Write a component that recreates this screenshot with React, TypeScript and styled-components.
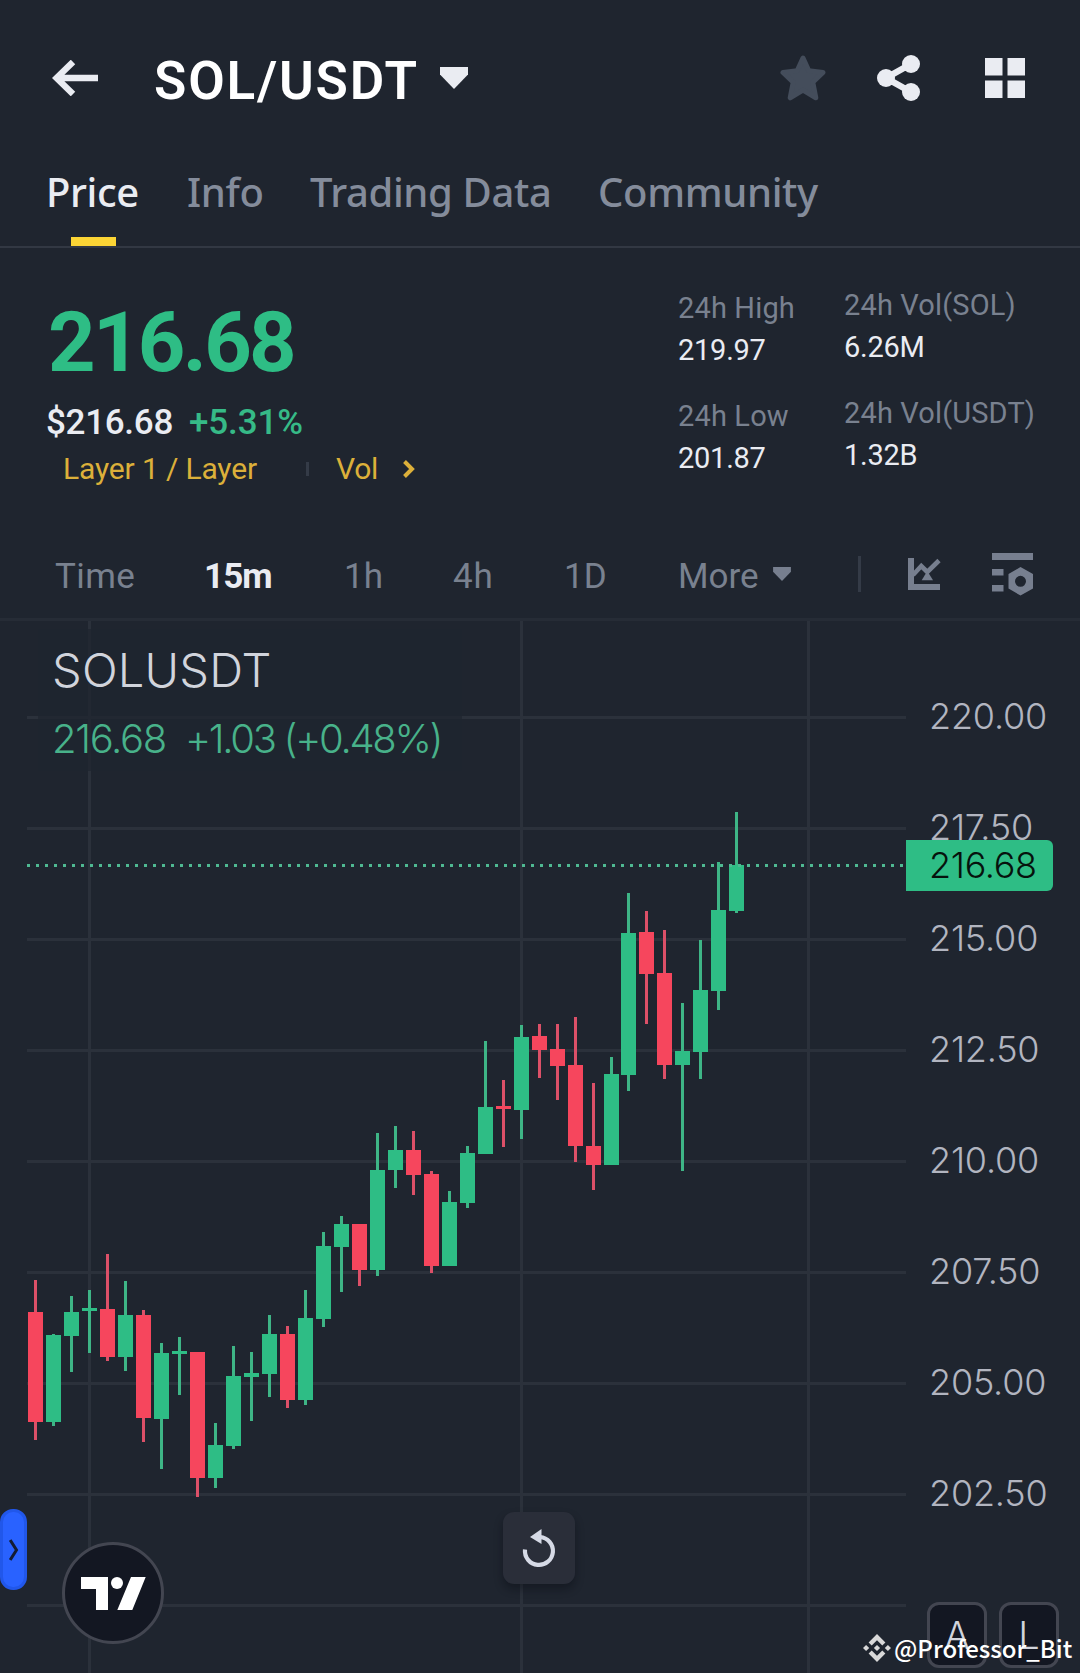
import React from "react";
import styled, { createGlobalStyle } from "styled-components";

const color = {
  bg: "#1f252f",
  text: "#eaecf2",
  muted: "#848c9b",
  dim: "#79818f",
  icon: "#777f8f",
  green: "#2ebd85",
  red: "#f6465d",
  yellow: "#fcd535",
  gold: "#dcb03a",
  grid: "#2b313b",
  axis: "#b2b5c0",
};

const sans = `Roboto, "Noto Sans", "Liberation Sans", sans-serif`;
const tabSans = `"Noto Sans", Roboto, "Liberation Sans", sans-serif`;
const chartSans = `Inter, Roboto, "Liberation Sans", sans-serif`;

const GlobalStyle = createGlobalStyle`
  *, *::before, *::after { box-sizing: border-box; }
  html, body { margin: 0; padding: 0; background: ${color.bg}; }
`;

const Page = styled.div`
  width: 1080px;
  height: 1673px;
  display: flex;
  flex-direction: column;
  overflow: hidden;
  background: ${color.bg};
  color: ${color.text};
  font-family: ${sans};
`;

const Text = styled.span<{
  $size: number;
  $line: number;
  $weight?: number;
  $color?: string;
  $track?: number;
  $family?: string;
}>`
  display: block;
  white-space: pre;
  font-size: ${(p) => p.$size}px;
  line-height: ${(p) => p.$line}px;
  font-weight: ${(p) => p.$weight ?? 400};
  color: ${(p) => p.$color ?? color.text};
  letter-spacing: ${(p) => p.$track ?? 0}px;
  font-family: ${(p) => p.$family ?? "inherit"};
`;

const Icon = styled.svg`
  display: block;
  flex: none;
`;

/* ---------- header ---------- */

const Header = styled.header`
  height: 160px;
  flex: none;
  display: flex;
  align-items: center;
  padding: 0 55px 4px 52px;
`;

const Pair = styled.div`
  display: flex;
  align-items: center;
  width: 314px;
  margin-left: 56px;
  justify-content: space-between;
`;

const Title = styled.h1`
  margin: 0;
  padding-top: 5px;
  font-size: 53px;
  line-height: 68px;
  font-weight: 600;
  letter-spacing: 1.8px;
  color: #fff;
`;

const Actions = styled.div`
  margin-left: auto;
  display: flex;
  align-items: center;
`;

const ActionButton = styled.div<{ $after?: number }>`
  margin-right: ${(p) => p.$after ?? 0}px;
`;

/* ---------- tabs ---------- */

const Tabs = styled.nav`
  height: 88px;
  flex: none;
  display: grid;
  grid-template-columns: 141px 123px 288px auto;
  padding-left: 46px;
  border-bottom: 2px solid #323843;
`;

const Tab = styled.div`
  display: flex;
  flex-direction: column;
  justify-content: space-between;
  padding-top: 7px;
`;

const TabLabel = styled.span<{ $active?: boolean }>`
  font-family: ${tabSans};
  font-size: 40px;
  line-height: 50px;
  font-weight: 500;
  letter-spacing: -0.35px;
  white-space: pre;
  color: ${(p) => (p.$active ? color.text : color.muted)};
`;

const Underline = styled.div`
  width: 45px;
  height: 9px;
  margin-left: 25px;
  background: ${color.yellow};
`;

/* ---------- summary ---------- */

const Summary = styled.section`
  height: 267px;
  flex: none;
  display: flex;
  justify-content: space-between;
  padding: 0 38px 0 46px;
`;

const PriceBlock = styled.div`
  padding-top: 49px;
`;

const LastPrice = styled.div`
  padding-left: 2px;
  font-size: 83px;
  line-height: 92px;
  font-weight: 700;
  letter-spacing: -2.7px;
  color: ${color.green};
`;

const Inline = styled.div<{ $gap: number; $left?: number }>`
  display: flex;
  align-items: center;
  gap: ${(p) => p.$gap}px;
  padding-left: ${(p) => p.$left ?? 0}px;
`;

const Divider = styled.div<{ $height: number }>`
  width: 3px;
  height: ${(p) => p.$height}px;
  background: #343b47;
`;

const Stats = styled.div`
  display: grid;
  grid-template-columns: 166px 198px;
`;

const StatColumn = styled.div<{ $top: number }>`
  display: flex;
  flex-direction: column;
  gap: 24px;
  padding-top: ${(p) => p.$top}px;
`;

/* ---------- intervals ---------- */

const Intervals = styled.div`
  height: 103px;
  flex: none;
  display: flex;
  align-items: center;
  padding: 21px 45px 0 55px;
`;

const Slot = styled.div<{ $width: number }>`
  width: ${(p) => p.$width}px;
  flex: none;
  display: flex;
  align-items: center;
`;

const CaretSlot = styled(Slot)`
  padding-bottom: 6px;
`;

const Tools = styled.div`
  flex: 1;
  display: grid;
  grid-template-columns: 50px 84px auto;
  align-items: center;
  padding-bottom: 6px;
`;

/* ---------- chart ---------- */

const Chart = styled.main`
  position: relative;
  flex: 1;
  display: flex;
  border-top: 3px solid #262c36;
`;

const Axis = styled.div`
  flex: 1;
  padding: 39px 0 0 23px;
`;

const AxisRow = styled.div`
  height: 111px;
  display: flex;
  align-items: center;
`;

const Legend = styled.div`
  position: absolute;
  left: 38px;
  top: 8px;
  width: 424px;
  height: 142px;
  padding: 10px 0 0 14px;
  background: rgba(31, 37, 47, 0.72);
`;

const PriceTag = styled.div`
  position: absolute;
  left: 906px;
  top: 219px;
  width: 147px;
  height: 51px;
  padding-left: 23px;
  border-radius: 0 6px 6px 0;
  background: ${color.green};
`;

const DrawerHandle = styled.div`
  position: absolute;
  left: 0;
  top: 888px;
  width: 27px;
  height: 81px;
  display: flex;
  align-items: center;
  justify-content: center;
  border: 3px solid #2157ea;
  border-radius: 13px;
  background: #2962ff;
`;

const Brand = styled.div`
  position: absolute;
  left: 62px;
  top: 921px;
  width: 102px;
  height: 102px;
  display: flex;
  align-items: center;
  justify-content: center;
  border: 3px solid #434651;
  border-radius: 50%;
  background: #131722;
`;

const ResetButton = styled.div`
  position: absolute;
  left: 503px;
  top: 891px;
  width: 72px;
  height: 72px;
  display: flex;
  align-items: center;
  justify-content: center;
  border-radius: 11px;
  background: #2a2e39;
  box-shadow: 0 5px 9px rgba(8, 11, 18, 0.4);
`;

const ScaleKeys = styled.div`
  position: absolute;
  left: 927px;
  top: 981px;
  display: flex;
  gap: 12px;
`;

const ScaleKey = styled.div`
  width: 60px;
  height: 66px;
  display: flex;
  justify-content: center;
  padding-top: 7px;
  border: 3px solid #434651;
  border-radius: 12px;
  background: #131722;
`;

const Watermark = styled.div`
  position: absolute;
  left: 863px;
  top: 1009px;
  display: flex;
  align-items: center;
  gap: 3px;
`;

type Candle = [up: 0 | 1, high: number, top: number, bottom: number, low: number];

const candles: Candle[] = [
  [0, 1280, 1312, 1422, 1440],
  [1, 1334, 1335, 1422, 1426],
  [1, 1296, 1312, 1336, 1372],
  [1, 1290, 1308, 1311, 1353],
  [0, 1254, 1309, 1357, 1361],
  [1, 1281, 1315, 1357, 1371],
  [0, 1310, 1315, 1418, 1442],
  [1, 1343, 1353, 1419, 1469],
  [1, 1337, 1351, 1354, 1395],
  [0, 1352, 1352, 1478, 1497],
  [1, 1423, 1445, 1478, 1488],
  [1, 1346, 1376, 1446, 1449],
  [1, 1352, 1373, 1377, 1421],
  [1, 1315, 1334, 1374, 1397],
  [0, 1326, 1334, 1400, 1408],
  [1, 1290, 1318, 1400, 1405],
  [1, 1232, 1246, 1319, 1327],
  [1, 1216, 1224, 1247, 1292],
  [0, 1224, 1224, 1270, 1286],
  [1, 1133, 1170, 1270, 1276],
  [1, 1126, 1150, 1170, 1188],
  [0, 1131, 1150, 1175, 1195],
  [0, 1171, 1174, 1266, 1273],
  [1, 1191, 1202, 1266, 1266],
  [1, 1146, 1153, 1203, 1208],
  [1, 1041, 1107, 1154, 1154],
  [0, 1080, 1106, 1109, 1147],
  [1, 1025, 1037, 1110, 1139],
  [0, 1024, 1036, 1050, 1078],
  [0, 1024, 1049, 1066, 1100],
  [0, 1017, 1065, 1146, 1162],
  [0, 1083, 1146, 1165, 1190],
  [1, 1057, 1074, 1165, 1165],
  [1, 893, 933, 1075, 1091],
  [0, 911, 932, 974, 1024],
  [0, 930, 973, 1065, 1079],
  [1, 1003, 1051, 1065, 1171],
  [1, 940, 990, 1052, 1079],
  [1, 862, 910, 991, 1010],
  [1, 812, 865, 911, 913],
];

const priceLevels = ["220.00", "217.50", "215.00", "212.50", "210.00", "207.50", "205.00", "202.50"];
const gridRows = [...priceLevels.keys(), priceLevels.length].map((i) => 717.5 + i * 111);
const gridColumns = [89.5, 521.5, 808.5];

function Plot() {
  return (
    <Icon width="906" height="1052" viewBox="0 621 906 1052" shapeRendering="crispEdges">
      <g stroke={color.grid} strokeWidth="3">
        {gridRows.map((y) => (
          <line key={y} x1="27" x2="906" y1={y} y2={y} />
        ))}
        {gridColumns.map((x) => (
          <line key={x} x1={x} x2={x} y1="621" y2="1673" />
        ))}
      </g>
      {candles.map(([up, high, top, bottom, low], i) => {
        const x = 28 + i * 18 - (i > 32 ? 1 : 0);
        return (
          <g key={i}>
            <rect x={x + 6} y={high} width="3" height={low - high} fill={up ? "#3eb586" : "#dc5068"} />
            <rect x={x} y={top} width="15" height={bottom - top} fill={up ? color.green : color.red} />
          </g>
        );
      })}
      <line x1="27" x2="906" y1="865.5" y2="865.5" stroke="#4fb992" strokeWidth="3" strokeDasharray="3 6" />
    </Icon>
  );
}

function Caret({ width, height, fill }: { width: number; height: number; fill: string }) {
  return (
    <Icon width={width} height={height} viewBox="0 0 28 22">
      <path d="M0 0H28V7.5L14 22L0 7.5Z" fill={fill} />
    </Icon>
  );
}

function Stat({ label, value }: { label: string; value: string }) {
  return (
    <div>
      <Text $size={29} $line={41} $color={color.dim} $track={0.15}>{label}</Text>
      <Text $size={29} $line={43} $track={-0.25}>{value}</Text>
    </div>
  );
}

export default function App() {
  return (
    <Page>
      <GlobalStyle />
      <Header>
        <Icon width="46" height="36" viewBox="0 0 46 36">
          <path d="M21 2L4.5 18L21 34M5 18H46" fill="none" stroke={color.text} strokeWidth="6.4" />
        </Icon>
        <Pair>
          <Title>SOL/USDT</Title>
          <Caret width={28} height={22} fill={color.text} />
        </Pair>
        <Actions>
          <ActionButton $after={51}>
            <Icon width="46" height="46" viewBox="0 0 46 46">
              <path
                d="M23 3L28.8 15.8L43 17.5L32.8 27.2L35.8 42.8L23 35.2L10.2 42.8L13.2 27.2L3 17.5L17.2 15.8Z"
                fill="#444d5b"
                stroke="#444d5b"
                strokeWidth="5"
                strokeLinejoin="round"
              />
            </Icon>
          </ActionButton>
          <ActionButton $after={65}>
            <Icon width="43" height="46" viewBox="0 0 43 46">
              <path d="M34 9L9 23L34 37" fill="none" stroke={color.text} strokeWidth="6.5" />
              <g fill={color.text}>
                <circle cx="34" cy="9" r="9" />
                <circle cx="9" cy="23" r="9" />
                <circle cx="34" cy="37" r="9" />
              </g>
            </Icon>
          </ActionButton>
          <ActionButton>
            <Icon width="40" height="40" viewBox="0 0 40 40">
              <path d="M0 0H17.5V17.5H0ZM22.5 0H40V17.5H22.5ZM0 22.5H17.5V40H0ZM22.5 22.5H40V40H22.5Z" fill={color.text} />
            </Icon>
          </ActionButton>
        </Actions>
      </Header>

      <Tabs>
        <Tab>
          <TabLabel $active>Price</TabLabel>
          <Underline />
        </Tab>
        <Tab>
          <TabLabel>Info</TabLabel>
        </Tab>
        <Tab>
          <TabLabel>Trading Data</TabLabel>
        </Tab>
        <Tab>
          <TabLabel>Community</TabLabel>
        </Tab>
      </Tabs>

      <Summary>
        <PriceBlock>
          <LastPrice>216.68</LastPrice>
          <Inline $gap={16}>
            <Text $size={35} $line={68} $weight={500} $track={-0.3}>$216.68</Text>
            <Text $size={35} $line={68} $weight={500} $track={-0.1} $color="#36ba87">+5.31%</Text>
          </Inline>
          <Inline $gap={0} $left={17}>
            <Slot $width={243}>
              <Text $size={30} $line={24} $color={color.gold} $track={-0.15}>Layer 1 / Layer</Text>
            </Slot>
            <Slot $width={30}>
              <Divider $height={14} />
            </Slot>
            <Slot $width={67}>
              <Text $size={30} $line={24} $color={color.gold} $track={-0.3}>Vol</Text>
            </Slot>
            <Icon width="12" height="18" viewBox="0 0 12 18">
              <path d="M1.5 1.5L9 9L1.5 16.5" fill="none" stroke={color.gold} strokeWidth="4" />
            </Icon>
          </Inline>
        </PriceBlock>
        <Stats>
          <StatColumn $top={40}>
            <Stat label="24h High" value="219.97" />
            <Stat label="24h Low" value="201.87" />
          </StatColumn>
          <StatColumn $top={37}>
            <Stat label="24h Vol(SOL)" value="6.26M" />
            <Stat label="24h Vol(USDT)" value="1.32B" />
          </StatColumn>
        </Stats>
      </Summary>

      <Intervals>
        <Slot $width={149}>
          <Text $size={35} $line={44} $color={color.dim} $track={0.4}>Time</Text>
        </Slot>
        <Slot $width={140}>
          <Text $size={35} $line={44} $weight={700} $track={-0.9}>15m</Text>
        </Slot>
        <Slot $width={109}>
          <Text $size={35} $line={44} $color={color.dim}>1h</Text>
        </Slot>
        <Slot $width={111}>
          <Text $size={35} $line={44} $color={color.dim} $track={0.8}>4h</Text>
        </Slot>
        <Slot $width={114}>
          <Text $size={35} $line={44} $color={color.dim}>1D</Text>
        </Slot>
        <Slot $width={95}>
          <Text $size={35} $line={44} $color={color.dim}>More</Text>
        </Slot>
        <CaretSlot $width={85}>
          <Caret width={18} height={14} fill={color.icon} />
        </CaretSlot>
        <Tools>
          <Divider $height={36} />
          <Icon width="33" height="32" viewBox="0 0 33 32">
            <path d="M0 0H6V26H32V32H0Z" fill={color.icon} />
            <path d="M5 17L13.3 8L19.3 14L31 2.5" fill="none" stroke={color.icon} strokeWidth="4.6" />
            <path d="M19.3 13L25 22.3H13.7Z" fill={color.icon} />
          </Icon>
          <Icon width="42" height="43" viewBox="0 0 42 43">
            <path d="M0 0H41V7H0ZM0 16H11.5V22.5H0ZM0 32H11.5V38.5H0Z" fill={color.icon} />
            <path
              fillRule="evenodd"
              d="M28.5 14L41 21V35.5L28.5 42.5L16.5 35.5V21ZM28.5 22.8A5.5 5.5 0 1 0 28.5 33.8A5.5 5.5 0 1 0 28.5 22.8Z"
              fill={color.icon}
            />
          </Icon>
        </Tools>
      </Intervals>

      <Chart>
        <Plot />
        <Axis>
          {priceLevels.map((level) => (
            <AxisRow key={level}>
              <Text $size={36} $line={44} $weight={300} $family={chartSans} $color={color.axis} $track={-0.2}>{level}</Text>
            </AxisRow>
          ))}
        </Axis>
        <Legend>
          <Text $size={47} $line={62} $weight={300} $family={chartSans} $color="#d1d4dc" $track={0.2}>SOLUSDT</Text>
          <Inline $gap={19}>
            <Text $size={40} $line={75} $weight={300} $family={chartSans} $color="#48b28a" $track={-1.3}>216.68</Text>
            <Text $size={40} $line={75} $weight={300} $family={chartSans} $color="#48b28a" $track={-2.3}>+1.03 (+0.48%)</Text>
          </Inline>
        </Legend>
        <PriceTag>
          <Text $size={36} $line={51} $weight={300} $family={chartSans} $color="#06120d" $track={-0.3}>216.68</Text>
        </PriceTag>
        <DrawerHandle>
          <Icon width="10" height="22" viewBox="0 0 10 22">
            <path d="M1.2 1L7.5 11L1.2 21" fill="none" stroke="#131c33" strokeWidth="3" />
          </Icon>
        </DrawerHandle>
        <Brand>
          <Icon width="65" height="33" viewBox="0 0 65 33">
            <path d="M0 0H27V33H15V12H0ZM50 0H64.7L51.3 33H36.3Z" fill="#fff" />
            <circle cx="36" cy="6" r="6" fill="#fff" />
          </Icon>
        </Brand>
        <ResetButton>
          <Icon width="34" height="40" viewBox="0 0 34 40">
            <path d="M3 21.5A14 14 0 1 0 18 9" fill="none" stroke="#d6dae6" strokeWidth="4.2" />
            <path d="M8 9L19.5 1V16Z" fill="#d6dae6" />
          </Icon>
        </ResetButton>
        <ScaleKeys>
          <ScaleKey>
            <Text $size={38} $line={46} $weight={300} $family={chartSans} $color="#d1d4dc">A</Text>
          </ScaleKey>
          <ScaleKey>
            <Text $size={38} $line={46} $weight={300} $family={chartSans} $color="#d1d4dc">L</Text>
          </ScaleKey>
        </ScaleKeys>
        <Watermark>
          <Icon width="28" height="28" viewBox="0 0 28 28">
            <path
              d="M14 0L22.4 8.4L19.3 11.5L14 6.2L8.7 11.5L5.6 8.4ZM14 28L22.4 19.6L19.3 16.5L14 21.8L8.7 16.5L5.6 19.6ZM3.1 10.9L6.2 14L3.1 17.1L0 14ZM24.9 10.9L28 14L24.9 17.1L21.8 14ZM14 10.9L17.1 14L14 17.1L10.9 14Z"
              fill="#d9d9d9"
            />
          </Icon>
          <Text $size={24} $line={36} $weight={500} $color="#fff" $family={`"Noto Sans CJK SC", "Noto Sans", sans-serif`}>@Professor_Bit</Text>
        </Watermark>
      </Chart>
    </Page>
  );
}
